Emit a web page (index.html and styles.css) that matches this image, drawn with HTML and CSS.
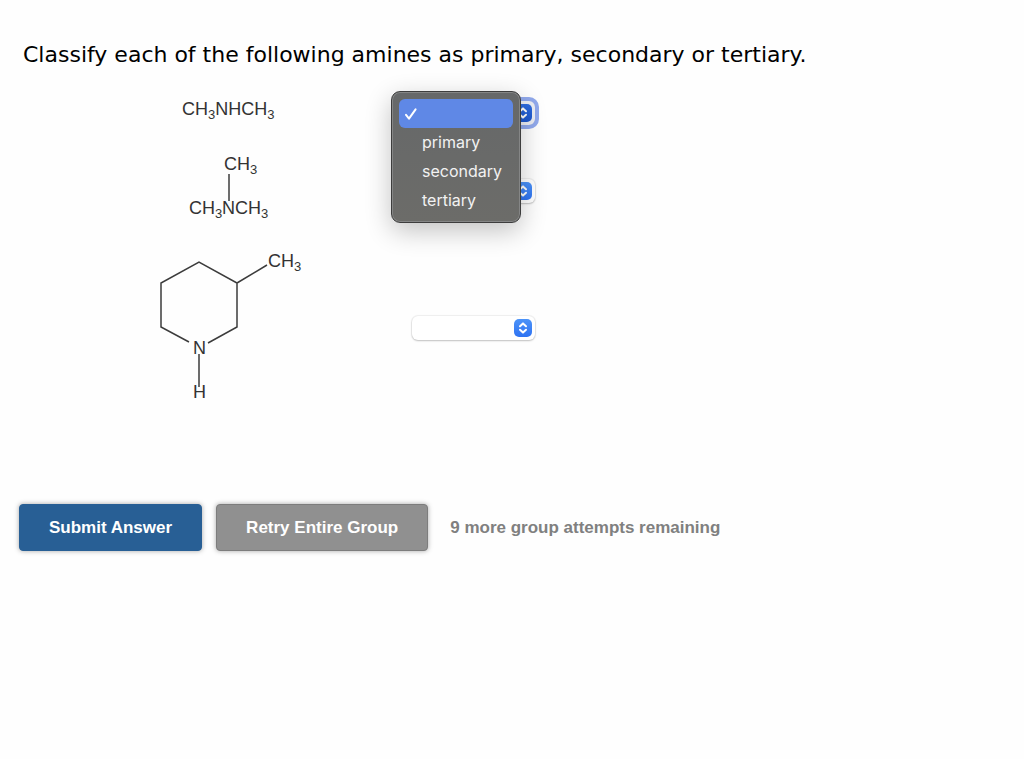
FILE: index.html
```html
<!DOCTYPE html>
<html lang="en">
<head>
<meta charset="utf-8">
<meta name="viewport" content="width=device-width, initial-scale=1">
<title>Classify amines</title>
<link rel="stylesheet" href="styles.css">
</head>
<body>
<main class="question">
  <h1 class="prompt">Classify each of the following amines as primary, secondary or tertiary.</h1>
  <form class="form">
    <div class="rows">
      <div class="row">
        <svg class="molecule" width="170" height="46" viewBox="0 0 170 46" role="img" aria-label="Dimethylamine">
          <text x="32" y="25">CH<tspan class="sub" dy="4">3</tspan><tspan dy="-4">NHCH</tspan><tspan class="sub" dy="4">3</tspan></text>
        </svg>
        <div class="picker">
          <select class="select select-open" aria-label="Class of dimethylamine">
            <option></option><option>primary</option><option>secondary</option><option>tertiary</option>
          </select>
          <svg class="arrows arrows-open" viewBox="0 0 18 18" aria-hidden="true"><path d="M6 7.2 9 4.4l3 2.8M6 10.8l3 2.8 3-2.8"/></svg>
          <ul class="menu" role="listbox" aria-label="Amine classes">
            <li class="item item-active" role="option" aria-selected="true" aria-label="No answer"><svg class="check" viewBox="0 0 14 14" aria-hidden="true"><path d="M2 7.8 5 11.6 11.6 2.4"/></svg></li>
            <li class="item" role="option">primary</li>
            <li class="item" role="option">secondary</li>
            <li class="item" role="option">tertiary</li>
          </ul>
        </div>
      </div>
      <div class="row">
        <svg class="molecule" width="170" height="74" viewBox="0 0 170 74" role="img" aria-label="Trimethylamine">
          <text x="74" y="16">CH<tspan class="sub" dy="4">3</tspan></text>
          <path d="M79 20V47"/>
          <text x="39" y="60">CH<tspan class="sub" dy="4">3</tspan></text>
          <text x="72" y="60">NCH<tspan class="sub" dy="4">3</tspan></text>
        </svg>
        <div class="picker">
          <select class="select" aria-label="Class of trimethylamine">
            <option></option><option>primary</option><option>secondary</option><option>tertiary</option>
          </select>
          <svg class="arrows" viewBox="0 0 18 18" aria-hidden="true"><path d="M6 7.2 9 4.4l3 2.8M6 10.8l3 2.8 3-2.8"/></svg>
        </div>
      </div>
      <div class="row">
        <svg class="molecule" width="170" height="164" viewBox="0 0 170 164" role="img" aria-label="3-Methylpiperidine">
          <path d="M39 96 11 81V37L49 16 87 37V81L58 97M87 37 117 19M49 108V141"/>
          <text x="118" y="21">CH<tspan class="sub" dy="4">3</tspan></text>
          <text x="43" y="108">N</text>
          <text x="43" y="152">H</text>
        </svg>
        <div class="picker">
          <select class="select" aria-label="Class of 3-methylpiperidine">
            <option></option><option>primary</option><option>secondary</option><option>tertiary</option>
          </select>
          <svg class="arrows" viewBox="0 0 18 18" aria-hidden="true"><path d="M6 7.2 9 4.4l3 2.8M6 10.8l3 2.8 3-2.8"/></svg>
        </div>
      </div>
    </div>
    <div class="actions">
      <button class="button button-submit" type="submit">Submit Answer</button>
      <button class="button button-retry" type="button">Retry Entire Group</button>
      <p class="attempts">9 more group attempts remaining</p>
    </div>
  </form>
</main>
</body>
</html>
```
FILE: styles.css
```css
* {
  box-sizing: border-box;
}

body {
  margin: 0;
  background: #fefefe;
  color: #000;
  font-family: "Liberation Sans", Arial, sans-serif;
}

.question {
  padding: 40px 19px;
}

.prompt {
  margin: 0;
  padding-left: 4px;
  font: 400 22px/30px "DejaVu Sans", Verdana, sans-serif;
}

.rows {
  display: flex;
  flex-direction: column;
  gap: 18px;
  padding: 20px 0 0 131px;
}

.row {
  display: flex;
  align-items: center;
  gap: 92px;
}

.molecule {
  flex: none;
  overflow: visible;
  font-size: 18px;
  fill: #333;
}

.molecule path {
  fill: none;
  stroke: #3c3c3c;
  stroke-width: 1.5;
}

.sub {
  font-size: 13px;
}

.picker {
  position: relative;
  width: 123px;
}

.select {
  display: block;
  width: 100%;
  height: 24px;
  padding: 0 24px 0 8px;
  border: 0;
  border-radius: 6px;
  appearance: none;
  background: #fff;
  box-shadow: 0 0 1px 1px rgba(0, 0, 0, 0.06), 0 1px 2px rgba(0, 0, 0, 0.2);
  font: 16px Inter, sans-serif;
}

.select-open {
  outline: 4px solid #91a9ec;
  outline-offset: 0;
  background: #eceef4;
}

.arrows {
  position: absolute;
  top: 3px;
  right: 3px;
  width: 18px;
  height: 18px;
  border-radius: 5px;
  background: linear-gradient(#4c93f8, #2f73f2);
  fill: none;
  stroke: #fff;
  stroke-width: 2;
  stroke-linecap: round;
  stroke-linejoin: round;
  pointer-events: none;
}

.arrows-open {
  background: linear-gradient(#2e6ce0, #1d56cb);
}

.menu {
  position: absolute;
  z-index: 1;
  top: -10px;
  left: -21px;
  width: 130px;
  margin: 0;
  padding: 7px;
  border: 1px solid #3d3d3d;
  border-radius: 9px;
  background: linear-gradient(#666869, #6c6c69);
  box-shadow: inset 0 0 0 1px #858686, 0 8px 26px rgba(0, 0, 0, 0.24);
  list-style: none;
}

.item {
  height: 29px;
  padding-left: 23px;
  border-radius: 6px;
  color: #f2f2f2;
  font: 400 16px/29px Inter, sans-serif;
}

.item-active {
  padding: 8px 5px;
  background: #5f88e6;
}

.check {
  display: block;
  width: 14px;
  height: 14px;
  fill: none;
  stroke: #fff;
  stroke-width: 2;
  stroke-linecap: round;
  stroke-linejoin: round;
}

.actions {
  display: flex;
  flex-wrap: wrap;
  align-items: center;
  gap: 14px;
  padding-top: 94px;
}

.button {
  padding: 12px 29px;
  border: 1px solid #285f95;
  border-radius: 4px;
  background: #285f95;
  box-shadow: 0 0 5px rgba(0, 0, 0, 0.35);
  color: #fff;
  font: 700 17px/21px "Liberation Sans", Arial, sans-serif;
}

.button-retry {
  border-color: #7d7d7d;
  background: #909090;
}

.attempts {
  margin: 0;
  padding-left: 8px;
  color: #808080;
  font-size: 17px;
  font-weight: 700;
  line-height: 21px;
}
```
